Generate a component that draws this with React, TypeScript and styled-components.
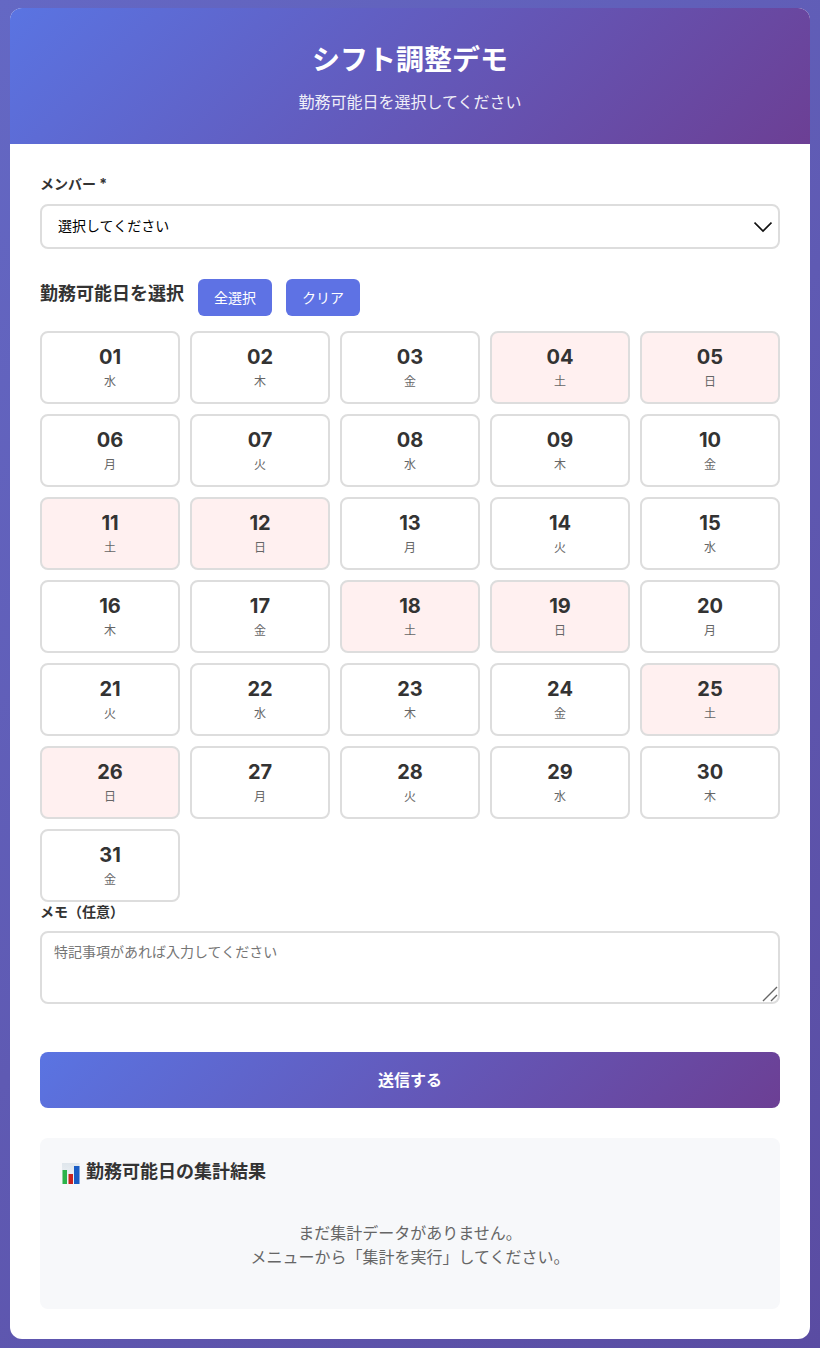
import React from 'react'
import styled, { createGlobalStyle } from 'styled-components'

const FONT = `Inter, "Noto Sans CJK JP", "Noto Sans", sans-serif`
const BRAND = 'linear-gradient(135deg, #5a74e2 0%, #6c3f94 100%)'

const GlobalStyle = createGlobalStyle`
  * {
    box-sizing: border-box;
  }

  html,
  body {
    margin: 0;
    padding: 0;
  }

  body {
    font-family: ${FONT};
    color: #333;
    background: linear-gradient(135deg, #6468c4 0%, #5a4ca2 100%);
    min-height: 1348px;
    padding: 8px 10px 9px;
  }
`

const Card = styled.main`
  width: 800px;
  height: 1331px;
  background: #fff;
  border-radius: 12px;
  overflow: hidden;
`

const Header = styled.header`
  height: 136px;
  padding-top: 31px;
  text-align: center;
  color: #fff;
  background: ${BRAND};
`

const Title = styled.h1`
  margin: 0 0 9px;
  font-size: 28px;
  line-height: 42px;
  font-weight: 700;
`

const Subtitle = styled.p`
  margin: 0;
  font-size: 16px;
  line-height: 24px;
  opacity: 0.9;
`

const Body = styled.div`
  padding: 30px;
`

const Label = styled.label`
  display: block;
  margin-bottom: 10px;
  font-size: 14px;
  line-height: 19px;
  font-weight: 700;
  color: #333;
`

const SelectWrap = styled.div`
  position: relative;
  margin-top: 11px;
  margin-bottom: 30px;
`

const Select = styled.select`
  display: block;
  width: 100%;
  height: 45px;
  padding: 0 16px 3px;
  appearance: none;
  background: #fff;
  border: 2px solid #ddd;
  border-radius: 8px;
  font-family: ${FONT};
  font-size: 14px;
  color: #000;
`

const Chevron = styled.svg`
  position: absolute;
  top: 17px;
  right: 8px;
  width: 18px;
  height: 12px;
  pointer-events: none;
`

const DaysHeader = styled.div`
  display: flex;
  align-items: flex-start;
  gap: 14px;
  height: 37px;
  margin-bottom: 15px;
`

const DaysTitle = styled.h2`
  margin: 0;
  font-size: 18px;
  line-height: 29px;
  font-weight: 700;
  color: #333;
`

const SmallButton = styled.button`
  width: 74px;
  height: 37px;
  padding: 0 0 2px;
  border: none;
  border-radius: 6px;
  background: #5e72e4;
  color: #fff;
  font-family: ${FONT};
  font-size: 14px;
`

const DayGrid = styled.div`
  display: grid;
  grid-template-columns: repeat(5, 140px);
  grid-auto-rows: 73px;
  gap: 10px;
`

const Day = styled.button<{ $weekend: boolean }>`
  display: flex;
  flex-direction: column;
  align-items: center;
  padding: 12px 0 0;
  border: 2px solid #ddd;
  border-radius: 8px;
  background: ${(p) => (p.$weekend ? '#fff0f0' : '#fff')};
  font-family: ${FONT};
  color: #333;
`

const DayNumber = styled.span`
  font-size: 20px;
  line-height: 24px;
  font-weight: 700;
`

const DayName = styled.span`
  margin-top: 5px;
  font-size: 12px;
  line-height: 16px;
  color: #666;
`

const MemoLabel = styled(Label)`
  margin: 0 0 10px;
`

const MemoWrap = styled.div`
  position: relative;
`

const Memo = styled.textarea`
  display: block;
  width: 100%;
  height: 73px;
  padding: 9px 12px;
  resize: none;
  border: 2px solid #ddd;
  border-radius: 8px;
  font-family: ${FONT};
  font-size: 14px;
  line-height: 20px;

  &::placeholder {
    color: #757575;
  }
`

const Grip = styled.svg`
  position: absolute;
  right: 2px;
  bottom: 2px;
  width: 16px;
  height: 16px;
  pointer-events: none;
`

const Submit = styled.button`
  display: block;
  width: 100%;
  height: 56px;
  margin-top: 48px;
  padding: 0 0 3px;
  border: none;
  border-radius: 8px;
  background: ${BRAND};
  color: #fff;
  font-family: ${FONT};
  font-size: 16px;
  font-weight: 700;
`

const Summary = styled.section`
  height: 171px;
  margin-top: 30px;
  padding: 20px;
  background: #f7f8fa;
  border-radius: 8px;
`

const SummaryTitle = styled.h3`
  display: flex;
  align-items: center;
  gap: 4px;
  margin: 0;
  font-size: 18px;
  line-height: 27px;
  font-weight: 700;
  color: #333;
`

const SummaryText = styled.p`
  margin: 36px 0 0;
  text-align: center;
  font-size: 16px;
  line-height: 24px;
  color: #666;
`

const WEEK = ['水', '木', '金', '土', '日', '月', '火']
const days = Array.from({ length: 31 }, (_, i) => ({
  num: String(i + 1).padStart(2, '0'),
  name: WEEK[i % 7],
  weekend: i % 7 === 3 || i % 7 === 4,
}))

const App = () => (
  <>
    <GlobalStyle />
    <Card>
      <Header>
        <Title>シフト調整デモ</Title>
        <Subtitle>勤務可能日を選択してください</Subtitle>
      </Header>
      <Body>
        <Label>メンバー *</Label>
        <SelectWrap>
          <Select defaultValue="">
            <option value="">選択してください</option>
          </Select>
          <Chevron viewBox="0 0 18 12" fill="none" stroke="#111" strokeWidth="1.7">
            <path d="M0.5 1.5L9 10l8.5-8.5" />
          </Chevron>
        </SelectWrap>
        <DaysHeader>
          <DaysTitle>勤務可能日を選択</DaysTitle>
          <SmallButton type="button">全選択</SmallButton>
          <SmallButton type="button">クリア</SmallButton>
        </DaysHeader>
        <DayGrid>
          {days.map((d) => (
            <Day key={d.num} type="button" $weekend={d.weekend}>
              <DayNumber>{d.num}</DayNumber>
              <DayName>{d.name}</DayName>
            </Day>
          ))}
        </DayGrid>
        <MemoLabel>メモ（任意）</MemoLabel>
        <MemoWrap>
          <Memo placeholder="特記事項があれば入力してください" />
          <Grip viewBox="0 0 16 16" fill="none" stroke="#666" strokeWidth="1.4">
            <path d="M1 15L15 1M9 15l6-6" />
          </Grip>
        </MemoWrap>
        <Submit type="button">送信する</Submit>
        <Summary>
          <SummaryTitle>
            <svg width="22" height="24" viewBox="0 0 22 24">
              <defs>
                <linearGradient id="chartBg" x1="0" y1="0" x2="0" y2="1">
                  <stop offset="0" stopColor="#dfe6ec" />
                  <stop offset="1" stopColor="#f4f6f8" />
                </linearGradient>
              </defs>
              <rect x="2" y="3" width="17.5" height="21" fill="url(#chartBg)" />
              <rect x="2.5" y="10" width="4.5" height="14" fill="#2bb34a" />
              <rect x="8.5" y="14" width="4.5" height="10" fill="#c9221f" />
              <rect x="14" y="6" width="5.5" height="18" fill="#1a5cc4" />
            </svg>
            勤務可能日の集計結果
          </SummaryTitle>
          <SummaryText>
            まだ集計データがありません。
            <br />
            メニューから「集計を実行」してください。
          </SummaryText>
        </Summary>
      </Body>
    </Card>
  </>
)

export default App
